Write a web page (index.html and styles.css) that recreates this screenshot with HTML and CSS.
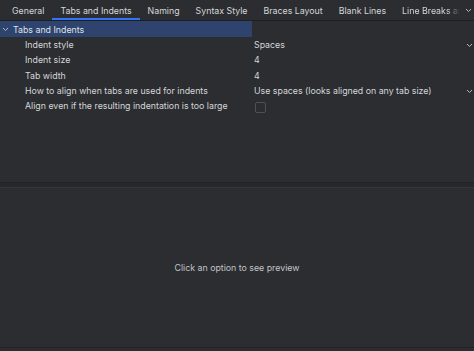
FILE: index.html
```html
<!DOCTYPE html>
<html>
<head>
<meta charset="utf-8">
<link rel="stylesheet" href="styles.css">
</head>
<body>
<div class="app">
  <div class="tabs">
    <div class="tab">General</div>
    <div class="tab active">Tabs and Indents</div>
    <div class="tab">Naming</div>
    <div class="tab">Syntax Style</div>
    <div class="tab">Braces Layout</div>
    <div class="tab">Blank Lines</div>
    <div class="tab clip">Line Breaks and Wrapping</div>
    <div class="more"><svg width="7" height="5" viewBox="0 0 7 5"><path d="M1 1 L3.5 3.5 L6 1" fill="none" stroke="#b4b8bf" stroke-width="1"/></svg></div>
  </div>
  <div class="tree">
    <div class="row group">
      <div class="cell name sel"><svg class="chev" width="7" height="5" viewBox="0 0 7 5"><path d="M1 1 L3.5 3.5 L6 1" fill="none" stroke="#b4b8bf" stroke-width="1"/></svg>Tabs and Indents</div>
      <div class="cell val"></div>
    </div>
    <div class="row">
      <div class="cell name sub">Indent style</div>
      <div class="cell val">Spaces<svg class="dd" width="7" height="5" viewBox="0 0 7 5"><path d="M1 1 L3.5 3.5 L6 1" fill="none" stroke="#b4b8bf" stroke-width="1"/></svg></div>
    </div>
    <div class="row">
      <div class="cell name sub">Indent size</div>
      <div class="cell val">4</div>
    </div>
    <div class="row">
      <div class="cell name sub">Tab width</div>
      <div class="cell val">4</div>
    </div>
    <div class="row">
      <div class="cell name sub">How to align when tabs are used for indents</div>
      <div class="cell val">Use spaces (looks aligned on any tab size)<svg class="dd" width="7" height="5" viewBox="0 0 7 5"><path d="M1 1 L3.5 3.5 L6 1" fill="none" stroke="#b4b8bf" stroke-width="1"/></svg></div>
    </div>
    <div class="row">
      <div class="cell name sub">Align even if the resulting indentation is too large</div>
      <div class="cell val"><span class="check"></span></div>
    </div>
  </div>
  <div class="splitter"></div>
  <div class="preview">Click an option to see preview</div>
  <div class="bottom"></div>
</div>
</body>
</html>
```
FILE: styles.css
```css
html, body {
  margin: 0;
  padding: 0;
  background: #2b2d30;
}
.app {
  width: 474px;
  height: 351px;
  display: flex;
  flex-direction: column;
  font-family: Inter, "Noto Sans", sans-serif;
  font-size: 8.8px;
  color: #d4d6da;
  overflow: hidden;
}
.tabs {
  height: 20px;
  display: flex;
  align-items: stretch;
  border-bottom: 1px solid #1e1f22;
  position: relative;
  padding-left: 4px;
  overflow: hidden;
}
.tab {
  padding: 0 8px;
  display: flex;
  align-items: center;
  white-space: nowrap;
  color: #d4d6da;
  flex-shrink: 0;
}
.tab.active {
  box-shadow: inset 0 -2px 0 #3574f0;
}
.tab.clip {
  width: 58px;
  overflow: hidden;
  padding-right: 0;
  -webkit-mask-image: linear-gradient(to right, #000 80%, transparent);
}
.more {
  position: absolute;
  right: 1px;
  top: 0;
  height: 20px;
  width: 8px;
  display: flex;
  align-items: center;
  background: #2b2d30;
}
.tree {
  height: 161px;
  display: flex;
  flex-direction: column;
}
.row {
  height: 15.3px;
  display: flex;
}
.cell {
  display: flex;
  align-items: center;
  white-space: nowrap;
}
.name {
  width: 252px;
  padding-left: 25px;
  box-sizing: border-box;
}
.name.sel {
  background: #2e436e;
  padding-left: 2px;
  color: #dfe1e5;
}
.group {
  height: 16px;
}
.chev {
  margin-right: 4px;
}
.val {
  flex: 1;
  padding-left: 2px;
  position: relative;
}
.dd {
  position: absolute;
  right: 1px;
  top: 6px;
}
.check {
  width: 9px;
  height: 9px;
  border: 1px solid #4e5157;
  border-radius: 2px;
  margin-left: 1px;
  margin-top: 4px;
}
.splitter {
  height: 4px;
  background: #27282b;
  border-top: 1px solid #222326;
  border-bottom: 1px solid #34363a;
}
.preview {
  flex: 1;
  display: flex;
  align-items: center;
  justify-content: center;
  color: #c2c4c9;
}
.bottom {
  height: 3px;
  border-top: 1px solid #222326;
  background: #2b2d30;
}
```
